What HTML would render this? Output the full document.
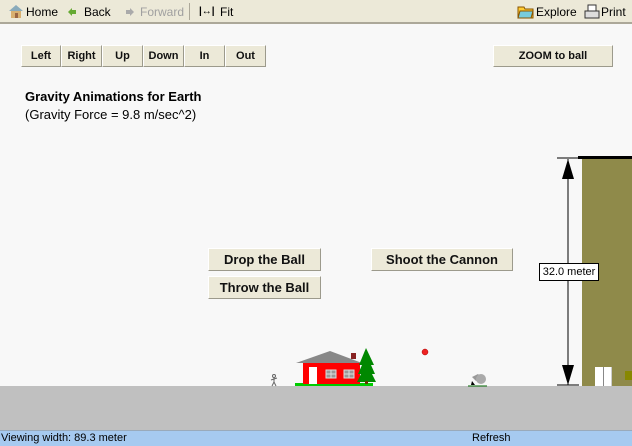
<!DOCTYPE html><html><head><style>
body{margin:0;width:632px;height:446px;overflow:hidden;background:#f8f8f8;font-family:"Liberation Sans",sans-serif;position:relative}
.a{position:absolute}
.tb{left:0;top:0;width:632px;height:24px;background:#ece9d8;border-bottom:2px solid #aca899;box-sizing:border-box;font-size:12px}
.tb span{position:absolute;top:5px}
.b{position:absolute;background:#ece9d8;border:1px solid;border-color:#fff #9c9a8c #9c9a8c #fff;box-sizing:border-box;font-weight:bold;font-size:11px;text-align:center;color:#111}
.bb{font-size:13px}
</style></head><body>
<div class="a tb">
<svg class="a" style="left:8px;top:4px" width="16" height="15"><path d="M1 7 L8 1 L15 7 Z" fill="#8ab"/><rect x="3" y="7" width="10" height="7" fill="#d8b070"/><rect x="7" y="9" width="3" height="5" fill="#964"/></svg>
<span style="left:26px">Home</span>
<svg class="a" style="left:68px;top:8px" width="9" height="8"><path d="M0 4 L4 0 L4 2 L8 2 L8 6 L4 6 L4 8Z" fill="#6a3"/></svg>
<span style="left:84px">Back</span>
<svg class="a" style="left:125px;top:8px" width="9" height="8"><path d="M9 4 L5 0 L5 2 L1 2 L1 6 L5 6 L5 8Z" fill="#aaa"/></svg>
<span style="left:140px;color:#a0a0a0">Forward</span>
<div class="a" style="left:189px;top:3px;width:1px;height:17px;background:#aca899"></div>
<span style="left:199px;font-size:10px;top:6px;font-weight:bold">|↔|</span>
<span style="left:220px">Fit</span>
<svg class="a" style="left:517px;top:5px" width="17" height="14"><path d="M1 2h6l1 2h8v9H1z" fill="#fc3" stroke="#850"/><path d="M3 6h13l-2 7H1z" fill="#7cd" stroke="#850"/></svg>
<span style="left:536px">Explore</span>
<svg class="a" style="left:584px;top:4px" width="16" height="16"><rect x="4" y="1" width="8" height="6" fill="#fff" stroke="#333"/><rect x="1" y="7" width="14" height="7" fill="#ddd" stroke="#333"/></svg>
<span style="left:601px">Print</span>
</div>
<div class="b" style="left:21px;top:45px;width:40px;height:22px;line-height:20px">Left</div>
<div class="b" style="left:61px;top:45px;width:41px;height:22px;line-height:20px">Right</div>
<div class="b" style="left:102px;top:45px;width:41px;height:22px;line-height:20px">Up</div>
<div class="b" style="left:143px;top:45px;width:41px;height:22px;line-height:20px">Down</div>
<div class="b" style="left:184px;top:45px;width:41px;height:22px;line-height:20px">In</div>
<div class="b" style="left:225px;top:45px;width:41px;height:22px;line-height:20px">Out</div>
<div class="b" style="left:493px;top:45px;width:120px;height:22px;line-height:20px">ZOOM to ball</div>
<div class="a" style="left:25px;top:89px;font-weight:bold;font-size:13px">Gravity Animations for Earth</div>
<div class="a" style="left:25px;top:107px;font-size:13px">(Gravity Force = 9.8 m/sec^2)</div>
<div class="b bb" style="left:208px;top:248px;width:113px;height:23px;line-height:21px">Drop the Ball</div>
<div class="b bb" style="left:208px;top:276px;width:113px;height:23px;line-height:21px">Throw the Ball</div>
<div class="b bb" style="left:371px;top:248px;width:142px;height:23px;line-height:21px">Shoot the Cannon</div>
<div class="a" style="left:582px;top:158px;width:50px;height:228px;background:#8f8a4a"></div>
<div class="a" style="left:578px;top:156px;width:54px;height:3px;background:#000"></div>
<div class="a" style="left:595px;top:367px;width:16px;height:19px;background:#fff;border-right:1px solid #ccc"></div>
<div class="a" style="left:603px;top:367px;width:1px;height:19px;background:#888"></div>
<div class="a" style="left:625px;top:371px;width:7px;height:9px;background:#880"></div>
<svg class="a" style="left:555px;top:157px" width="28" height="230"><line x1="13" y1="2" x2="13" y2="228" stroke="#000"/><line x1="2" y1="1" x2="24" y2="1" stroke="#000"/><line x1="2" y1="228" x2="24" y2="228" stroke="#000"/><path d="M13 2 L7 22 L19 22Z M13 228 L7 208 L19 208Z"/></svg>
<div class="a" style="left:539px;top:263px;width:58px;height:16px;background:#fff;border:1px solid #000;font-size:11px;text-align:center;line-height:16px">32.0 meter</div>
<div class="a" style="left:0;top:386px;width:632px;height:44px;background:#c0c0c0"></div>
<div class="a" style="left:0;top:430px;width:632px;height:16px;background:#a6caf0;border-top:1px solid #9ab;box-sizing:border-box;font-size:11px;line-height:15px"><span class="a" style="left:1px">Viewing width: 89.3 meter</span><span class="a" style="left:472px">Refresh</span></div>
<svg class="a" style="left:268px;top:345px" width="230" height="42">
<g stroke="#666" fill="none"><circle cx="6" cy="31" r="1.5"/><line x1="6" y1="33" x2="6" y2="37"/><line x1="3" y1="35" x2="9" y2="33"/><line x1="6" y1="37" x2="4" y2="41"/><line x1="6" y1="37" x2="8" y2="41"/></g>
<rect x="27" y="38" width="78" height="3" fill="#0c0"/>
<rect x="83" y="8" width="5" height="6" fill="#822"/>
<path d="M28 18 L62 6 L94 18Z" fill="#888"/>
<rect x="35" y="18" width="57" height="21" fill="#f00"/>
<rect x="41" y="22" width="8" height="17" fill="#fff"/>
<rect x="58" y="25" width="10" height="8" fill="#999" stroke="#ddd"/><line x1="63" y1="25" x2="63" y2="33" stroke="#ddd"/><line x1="58" y1="29" x2="68" y2="29" stroke="#ddd"/>
<rect x="76" y="25" width="10" height="8" fill="#999" stroke="#ddd"/><line x1="81" y1="25" x2="81" y2="33" stroke="#ddd"/><line x1="76" y1="29" x2="86" y2="29" stroke="#ddd"/>
<path d="M98 3 L91 20 L94 20 L90 29 L93 29 L89 37 L108 37 L104 29 L107 29 L103 20 L106 20Z" fill="#080"/>
<rect x="97" y="36" width="3" height="3" fill="#630"/>
<circle cx="157" cy="7" r="3" fill="#e22" stroke="#a00" stroke-width=".5"/>
<path d="M203 40 L204 36 L207 40Z" fill="#000"/>
<path d="M204 32 L210 29 L214 33 L208 36Z" fill="#999"/><circle cx="213" cy="34" r="5" fill="#aaa"/>
<line x1="200" y1="41" x2="219" y2="41" stroke="#060"/>
</svg>
</body></html>
